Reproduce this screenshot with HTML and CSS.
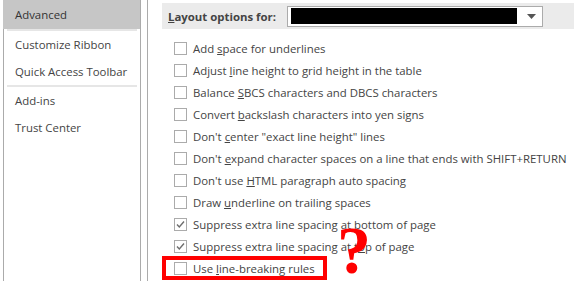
FILE: index.html
```html
<!DOCTYPE html>
<html>
<head>
<meta charset="utf-8">
<link rel="stylesheet" href="styles.css">
</head>
<body>
<div class="page">
  <nav class="sidebar">
    <div class="nav-item active">Advanced</div>
    <div class="sep"></div>
    <div class="nav-item">Customize Ribbon</div>
    <div class="nav-item">Quick Access Toolbar</div>
    <div class="sep"></div>
    <div class="nav-item">Add-ins</div>
    <div class="nav-item">Trust Center</div>
  </nav>
  <div class="vline"></div>
  <main class="main">
    <div class="header">
      <span class="label"><u>L</u>ayout options for:</span>
      <div class="select">
        <div class="redacted"></div>
        <svg class="arrow" width="9" height="5" viewBox="0 0 9 5"><path d="M0 0H9L4.5 5Z" fill="#555"/></svg>
      </div>
    </div>
    <ul class="options">
      <li><span class="cb"></span><span class="txt">Add <u>s</u>pace for underlines</span></li>
      <li><span class="cb"></span><span class="txt">Adjust <u>l</u>ine height to grid height in the table</span></li>
      <li><span class="cb"></span><span class="txt">Balance <u>S</u>BCS characters and DBCS characters</span></li>
      <li><span class="cb"></span><span class="txt">Convert <u>b</u>ackslash characters into yen signs</span></li>
      <li><span class="cb"></span><span class="txt">Don't <u>c</u>enter "exact line height" lines</span></li>
      <li><span class="cb"></span><span class="txt">Don't <u>e</u>xpand character spaces on a line that ends with SHIFT+RETURN</span></li>
      <li><span class="cb"></span><span class="txt">Don't use <u>H</u>TML paragraph auto spacing</span></li>
      <li><span class="cb"></span><span class="txt">Draw <u>u</u>nderline on trailing spaces</span></li>
      <li><span class="cb"><svg width="11" height="11" viewBox="0 0 11 11"><path d="M2 5.5L4.3 8L9 2.5" fill="none" stroke="#6e6e6e" stroke-width="1.4"/></svg></span><span class="txt">Suppress extra line spacing a<u>t</u> bottom of page</span></li>
      <li><span class="cb"><svg width="11" height="11" viewBox="0 0 11 11"><path d="M2 5.5L4.3 8L9 2.5" fill="none" stroke="#6e6e6e" stroke-width="1.4"/></svg></span><span class="txt">Suppress extra line spacing at t<u>o</u>p of page</span></li>
      <li><span class="cb"></span><span class="txt">Use <u>l</u>ine-breaking rules</span></li>
    </ul>
    <div class="highlight"></div>
    <div class="qmark">?</div>
  </main>
</div>
</body>
</html>
```
FILE: styles.css
```css
html, body {
  margin: 0;
  padding: 0;
  background: #fff;
}
body {
  width: 574px;
  height: 282px;
  overflow: hidden;
  font-family: "Open Sans", "Noto Sans", sans-serif;
  font-size: 11.4px;
  color: #444;
}
.page {
  display: flex;
  height: 281px;
}
.sidebar {
  width: 136px;
  margin-left: 3px;
  border-left: 1px solid #ababab;
  border-right: 1px solid #ababab;
  display: flex;
  flex-direction: column;
}
.nav-item {
  height: 27px;
  line-height: 27px;
  padding-left: 11px;
  white-space: nowrap;
}
.nav-item.active {
  height: 29px;
  line-height: 29px;
  margin-left: -1px;
  padding-left: 12px;
  background: #c6c6c6;
  color: #333;
}
.sep {
  height: 2px;
  margin: 0 3px 0 3px;
  background: #e6e6e6;
}
.vline {
  width: 1px;
  margin-left: 6px;
  background: #ababab;
}
.main {
  position: relative;
  flex: 1;
  margin-left: 14px;
}
.header {
  margin-top: 3px;
  height: 26px;
  background: #ebebeb;
  display: flex;
  align-items: center;
  padding-left: 6px;
}
.label {
  font-weight: 700;
  color: #444;
  width: 119px;
  white-space: nowrap;
}
.select {
  width: 251px;
  height: 19px;
  border: 1px solid #ababab;
  background: #fff;
  display: flex;
  align-items: center;
  padding-left: 3px;
}
.redacted {
  width: 226px;
  height: 16px;
  background: #000;
}
.arrow {
  margin-left: 10px;
}
.options {
  list-style: none;
  margin: 8px 0 0 0;
  padding: 0 0 0 12px;
}
.options li {
  height: 22px;
  display: flex;
  align-items: center;
  white-space: nowrap;
}
.txt {
  white-space: pre;
}
.cb {
  width: 11px;
  height: 11px;
  border: 1px solid #ababab;
  background: #fff;
  margin-right: 6px;
  display: flex;
  align-items: center;
  justify-content: center;
  flex: none;
}
.highlight {
  position: absolute;
  left: 0;
  top: 256px;
  width: 157px;
  height: 16px;
  border: 4px solid #f00;
}
.qmark {
  position: absolute;
  left: 175px;
  top: 223px;
  font-family: "Liberation Serif", serif;
  font-weight: 700;
  font-size: 68px;
  line-height: 0.8;
  color: #f00;
}
```
